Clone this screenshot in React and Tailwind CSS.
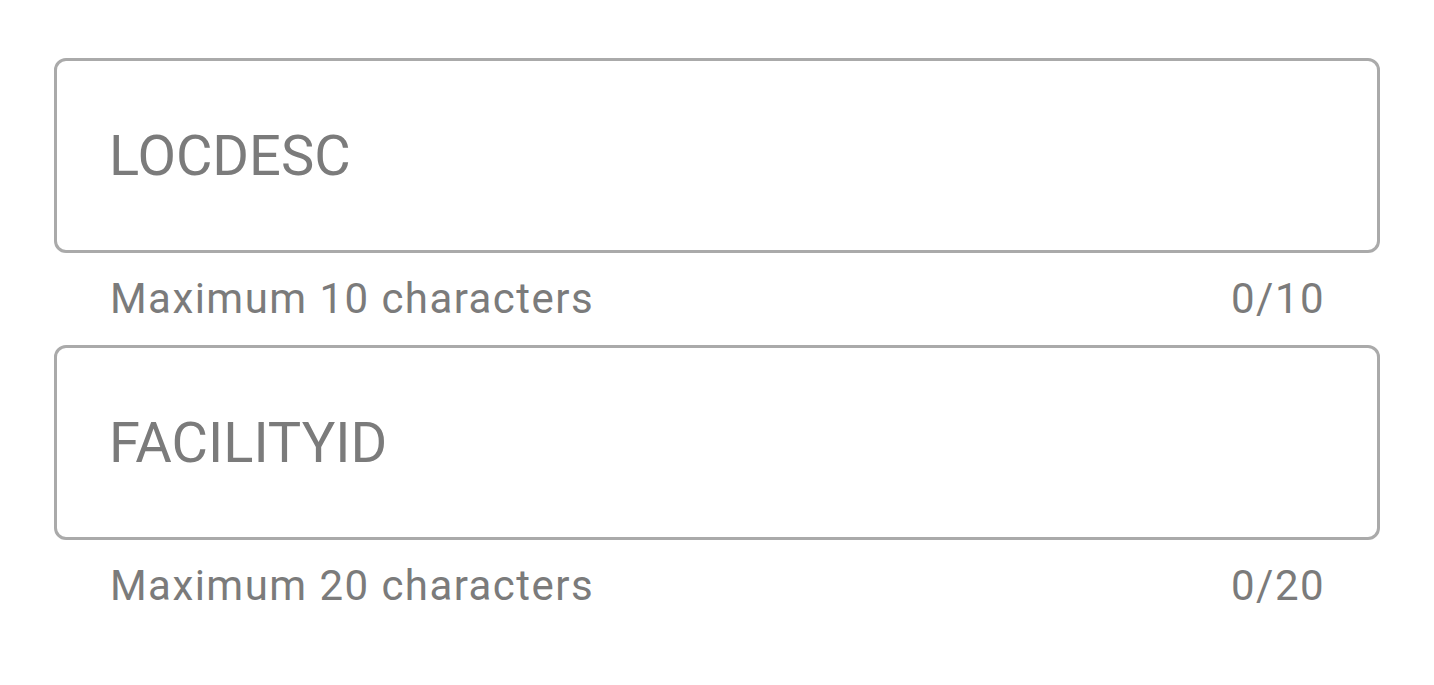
const FIELDS = [
  { label: 'LOCDESC', max: 10 },
  { label: 'FACILITYID', max: 20 },
];

function OutlinedField({ label, max }) {
  return (
    <div>
      <div className="h-[195px] border-[3px] border-[#aaaaaa] rounded-[12px] flex items-center pl-[52px]">
        <span className="text-[56px] text-[#7b7b7b]">{label}</span>
      </div>
      <div className="h-[92px] pt-[25px] pl-[56px] pr-[55px] flex justify-between text-[42px] leading-none tracking-[1.45px] text-[#7b7b7b]">
        <span>Maximum {max} characters</span>
        <span>0/{max}</span>
      </div>
    </div>
  );
}

export default function App() {
  return (
    <div className="w-[1434px] h-[685px] bg-white pt-[58px] px-[54px] font-['Roboto',sans-serif]">
      {FIELDS.map((f) => (
        <OutlinedField key={f.label} label={f.label} max={f.max} />
      ))}
    </div>
  );
}
